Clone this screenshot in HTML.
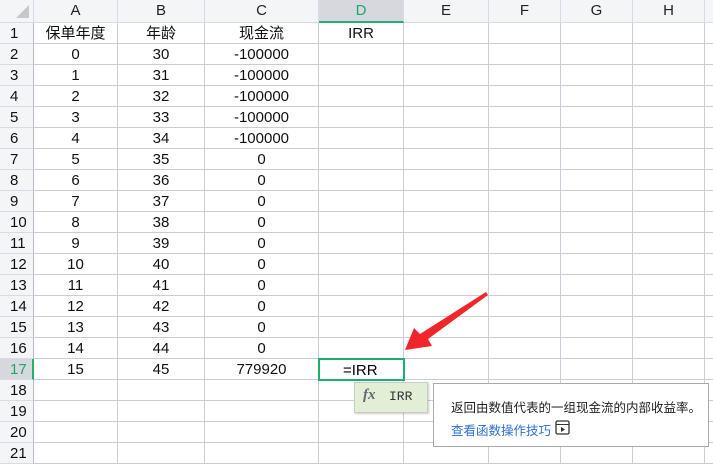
<!DOCTYPE html>
<html><head><meta charset="utf-8"><style>
body{margin:0;width:713px;height:452px;overflow:hidden;background:#fff;font-family:"Liberation Sans","Noto Sans CJK SC",sans-serif;position:relative}
.row{display:flex;height:21px}
.row>div{box-sizing:border-box;height:21px;border-right:1px solid #c8ccdb;border-bottom:1px solid #c8ccdb;text-align:center;font-size:15px;color:#111;line-height:21px;white-space:nowrap;overflow:hidden;flex:none}
.row>div:nth-child(1){width:34px;background:#f4f5f7;text-align:left;padding-left:10px;border-color:#d8dbe3;border-right-color:#b9bcc6}
.row>div:nth-child(2){width:84px}.row>div:nth-child(3){width:87px}.row>div:nth-child(4){width:114px}
.row>div:nth-child(5){width:85px}.row>div:nth-child(6){width:85px}.row>div:nth-child(7){width:72px}
.row>div:nth-child(8){width:72px}.row>div:nth-child(9){width:72px}.row>div:nth-child(10){width:40px}
.row.h,.row.h>div{height:23px;line-height:22px}
.row.h>div{background:#f4f5f7;color:#222;border-color:#d8dbe3}
.row.h>div.sel{background:#d6d8dd;color:#1fa86b;border-bottom:2px solid #22b06f}
.row>div.rsel{background:#d6d8dd;color:#1fa86b;border-right:2px solid #22b06f}
.cur{position:absolute;left:318px;top:358px;width:60px;height:19px;border:2px solid #1fae72;font-size:15px;line-height:21px;padding-left:23px;box-sizing:content-box;background:#fff}
.fx{position:absolute;left:354px;top:382px;width:72px;height:29px;background:#e2eed6;border:1px solid #c6ccc0;box-shadow:1px 1px 2px rgba(0,0,0,.2)}
.tip{position:absolute;left:433px;top:383px;width:274px;height:62px;background:#fff;border:1px solid #aaa;font-size:12.5px}
</style></head><body>
<div class="row h"><div style="position:relative"><svg style="position:absolute;left:0;top:0" width="34" height="22"><polygon points="29,5 29,18 16,18" fill="#c6c8cc"/></svg></div><div>A</div><div>B</div><div>C</div><div class="sel">D</div><div>E</div><div>F</div><div>G</div><div>H</div><div></div></div>
<div class="row"><div>1</div><div>保单年度</div><div>年龄</div><div>现金流</div><div>IRR</div><div></div><div></div><div></div><div></div><div></div></div>
<div class="row"><div>2</div><div>0</div><div>30</div><div>-100000</div><div></div><div></div><div></div><div></div><div></div><div></div></div>
<div class="row"><div>3</div><div>1</div><div>31</div><div>-100000</div><div></div><div></div><div></div><div></div><div></div><div></div></div>
<div class="row"><div>4</div><div>2</div><div>32</div><div>-100000</div><div></div><div></div><div></div><div></div><div></div><div></div></div>
<div class="row"><div>5</div><div>3</div><div>33</div><div>-100000</div><div></div><div></div><div></div><div></div><div></div><div></div></div>
<div class="row"><div>6</div><div>4</div><div>34</div><div>-100000</div><div></div><div></div><div></div><div></div><div></div><div></div></div>
<div class="row"><div>7</div><div>5</div><div>35</div><div>0</div><div></div><div></div><div></div><div></div><div></div><div></div></div>
<div class="row"><div>8</div><div>6</div><div>36</div><div>0</div><div></div><div></div><div></div><div></div><div></div><div></div></div>
<div class="row"><div>9</div><div>7</div><div>37</div><div>0</div><div></div><div></div><div></div><div></div><div></div><div></div></div>
<div class="row"><div>10</div><div>8</div><div>38</div><div>0</div><div></div><div></div><div></div><div></div><div></div><div></div></div>
<div class="row"><div>11</div><div>9</div><div>39</div><div>0</div><div></div><div></div><div></div><div></div><div></div><div></div></div>
<div class="row"><div>12</div><div>10</div><div>40</div><div>0</div><div></div><div></div><div></div><div></div><div></div><div></div></div>
<div class="row"><div>13</div><div>11</div><div>41</div><div>0</div><div></div><div></div><div></div><div></div><div></div><div></div></div>
<div class="row"><div>14</div><div>12</div><div>42</div><div>0</div><div></div><div></div><div></div><div></div><div></div><div></div></div>
<div class="row"><div>15</div><div>13</div><div>43</div><div>0</div><div></div><div></div><div></div><div></div><div></div><div></div></div>
<div class="row"><div>16</div><div>14</div><div>44</div><div>0</div><div></div><div></div><div></div><div></div><div></div><div></div></div>
<div class="row"><div class="rsel">17</div><div>15</div><div>45</div><div>779920</div><div></div><div></div><div></div><div></div><div></div><div></div></div>
<div class="row"><div>18</div><div></div><div></div><div></div><div></div><div></div><div></div><div></div><div></div><div></div></div>
<div class="row"><div>19</div><div></div><div></div><div></div><div></div><div></div><div></div><div></div><div></div><div></div></div>
<div class="row"><div>20</div><div></div><div></div><div></div><div></div><div></div><div></div><div></div><div></div><div></div></div>
<div class="row"><div>21</div><div></div><div></div><div></div><div></div><div></div><div></div><div></div><div></div><div></div></div>
<div class="cur">=IRR</div>
<div class="fx"><span style="position:absolute;left:8px;top:4px;font-family:'Liberation Serif',serif;font-style:italic;font-weight:bold;font-size:15px;color:#667">fx</span><span style="position:absolute;left:34px;top:6px;font-family:'Liberation Mono',monospace;font-size:13px;color:#333">IRR</span></div>
<div class="tip"><div style="position:absolute;left:17px;top:13px;color:#222">返回由数值代表的一组现金流的内部收益率。</div><div style="position:absolute;left:17px;top:36px;color:#2a6fd6">查看函数操作技巧</div><svg style="position:absolute;left:121px;top:36px" width="16" height="16"><rect x="1" y="1" width="13" height="13" rx="1.5" fill="none" stroke="#333" stroke-width="1.3"/><line x1="1" y1="4.5" x2="14" y2="4.5" stroke="#333"/><polygon points="6,7 6,12 10,9.5" fill="#333"/></svg></div>
<svg style="position:absolute;left:0;top:0" width="713" height="452"><polygon points="486,292 488,295 428,339 432,346 405,350 414,328 420,334" fill="#f0262a"/></svg>
</body></html>
